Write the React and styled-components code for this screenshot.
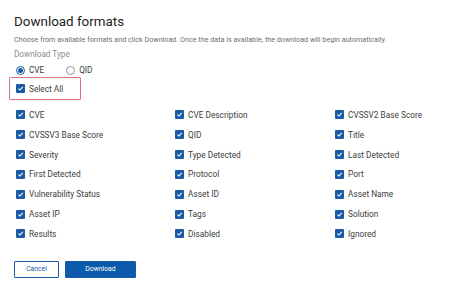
import React from "react";
import styled, { createGlobalStyle } from "styled-components";

const Global = createGlobalStyle`
  html, body { margin: 0; padding: 0; background: #fff; }
  body { font-family: Roboto, "Liberation Sans", Arial, sans-serif; }
`;

const BLUE = "#1b5ba6";

const Page = styled.div`
  width: 474px;
  height: 292px;
  box-sizing: border-box;
  padding: 13px 0 0 14px;
  display: flex;
  flex-direction: column;
  overflow: hidden;
`;

const Title = styled.h1`
  margin: 0;
  font-size: 13.4px;
  line-height: 18px;
  font-weight: 400;
  color: #222;
`;

const Desc = styled.p`
  margin: 4px 0 0;
  font-size: 7.2px;
  line-height: 9px;
  color: #6b6f73;
`;

const Label = styled.div`
  margin-top: 5px;
  font-size: 8.2px;
  line-height: 11px;
  color: #8a8d91;
`;

const RadioRow = styled.div`
  display: flex;
  align-items: center;
  gap: 22px;
  margin-top: 4px;
  padding-left: 2px;
  height: 12px;
`;

const RadioItem = styled.label`
  display: flex;
  align-items: center;
  gap: 4px;
  font-size: 8.2px;
  color: #3a3a3a;
`;

const RadioCircle = styled.span`
  width: 9px;
  height: 9px;
  box-sizing: border-box;
  border-radius: 50%;
  border: 1px solid ${(p) => (p.$on ? BLUE : "#8f9398")};
  display: flex;
  align-items: center;
  justify-content: center;
  &::after {
    content: "";
    width: 5px;
    height: 5px;
    border-radius: 50%;
    background: ${(p) => (p.$on ? BLUE : "transparent")};
  }
`;

const SelectAllBox = styled.div`
  margin: 1px 0 0 -5px;
  width: 72px;
  height: 23px;
  box-sizing: border-box;
  border: 1px solid #e0707a;
  border-radius: 1px;
  display: flex;
  align-items: center;
  padding-left: 6px;
`;

const Check = styled.label`
  display: flex;
  align-items: center;
  gap: 4px;
  font-size: 8.3px;
  line-height: 12px;
  color: #3d3d3d;
  white-space: nowrap;
`;

const Box = styled.span`
  width: 9px;
  height: 9px;
  flex: none;
  background: ${BLUE};
  border-radius: 1px;
  display: flex;
  align-items: center;
  justify-content: center;
`;

const Grid = styled.div`
  display: grid;
  grid-template-columns: 159px 160px 1fr;
  grid-auto-rows: 19.83px;
  align-items: center;
  margin-top: 5px;
  padding-left: 2px;
`;

const Actions = styled.div`
  display: flex;
  gap: 6px;
  margin-top: 17px;
`;

const Button = styled.button`
  height: 17px;
  box-sizing: border-box;
  border-radius: 1px;
  font-family: inherit;
  font-size: 6.8px;
  padding: 0;
  cursor: pointer;
  border: 1px solid ${BLUE};
  background: ${(p) => (p.$primary ? "#0c5aab" : "#fff")};
  color: ${(p) => (p.$primary ? "#fff" : BLUE)};
  width: ${(p) => p.$w}px;
`;

const Tick = () => (
  <svg width="7" height="7" viewBox="0 0 10 10">
    <path d="M2 5.2 L4.2 7.3 L8.2 2.8" fill="none" stroke="#fff" strokeWidth="1.5" />
  </svg>
);

const CheckItem = ({ children }) => (
  <Check>
    <Box>
      <Tick />
    </Box>
    {children}
  </Check>
);

const items = [
  "CVE", "CVE Description", "CVSSV2 Base Score",
  "CVSSV3 Base Score", "QID", "Title",
  "Severity", "Type Detected", "Last Detected",
  "First Detected", "Protocol", "Port",
  "Vulnerability Status", "Asset ID", "Asset Name",
  "Asset IP", "Tags", "Solution",
  "Results", "Disabled", "Ignored",
];

export default function App() {
  return (
    <>
      <Global />
      <Page>
        <Title>Download formats</Title>
        <Desc>
          Choose from available formats and click Download. Once the data is available, the download will begin automatically.
        </Desc>
        <Label>Download Type</Label>
        <RadioRow>
          <RadioItem>
            <RadioCircle $on />
            CVE
          </RadioItem>
          <RadioItem>
            <RadioCircle />
            QID
          </RadioItem>
        </RadioRow>
        <SelectAllBox>
          <CheckItem>Select All</CheckItem>
        </SelectAllBox>
        <Grid>
          {items.map((t) => (
            <CheckItem key={t}>{t}</CheckItem>
          ))}
        </Grid>
        <Actions>
          <Button $w={45}>Cancel</Button>
          <Button $primary $w={71}>Download</Button>
        </Actions>
      </Page>
    </>
  );
}
